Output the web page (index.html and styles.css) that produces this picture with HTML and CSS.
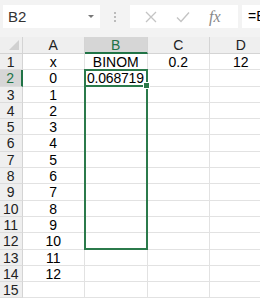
FILE: index.html
```html
<!DOCTYPE html>
<html lang="en">
<head>
    <meta charset="UTF-8">
    <title>Hoja</title>
    <link rel="stylesheet" href="styles.css">
</head>
<body>

    <!-- Barra de fórmulas -->
    <div class="toolbar">
        <div class="namebox">
            <span>B2</span>
            <span class="caret"></span>
        </div>
        <div class="grip"><i></i><i></i><i></i></div>
        <div class="fx-buttons">
            <svg width="12" height="12" viewBox="0 0 12 12"><path d="M1 1L11 11M11 1L1 11" stroke="#c4c4c4" stroke-width="1.3" fill="none"/></svg>
            <svg width="14" height="12" viewBox="0 0 14 12"><path d="M1 6.5L5 10.5L13 1.5" stroke="#c4c4c4" stroke-width="1.4" fill="none"/></svg>
            <span class="fx">fx</span>
        </div>
        <div class="formula">=BINOM.DIST(A2,$D$1,$C$1,FALSE)</div>
    </div>

    <!-- Hoja -->
    <div class="sheet">
        <div class="corner"><span></span></div>
        <div class="colhead">A</div>
        <div class="colhead active">B</div>
        <div class="colhead">C</div>
        <div class="colhead">D</div>

        <div class="rowhead">1</div><div class="cell">x</div><div class="cell">BINOM</div><div class="cell">0.2</div><div class="cell">12</div>
        <div class="rowhead active">2</div><div class="cell">0</div><div class="cell left">0.068719</div><div class="cell"></div><div class="cell"></div>
        <div class="rowhead">3</div><div class="cell">1</div><div class="cell"></div><div class="cell"></div><div class="cell"></div>
        <div class="rowhead">4</div><div class="cell">2</div><div class="cell"></div><div class="cell"></div><div class="cell"></div>
        <div class="rowhead">5</div><div class="cell">3</div><div class="cell"></div><div class="cell"></div><div class="cell"></div>
        <div class="rowhead">6</div><div class="cell">4</div><div class="cell"></div><div class="cell"></div><div class="cell"></div>
        <div class="rowhead">7</div><div class="cell">5</div><div class="cell"></div><div class="cell"></div><div class="cell"></div>
        <div class="rowhead">8</div><div class="cell">6</div><div class="cell"></div><div class="cell"></div><div class="cell"></div>
        <div class="rowhead">9</div><div class="cell">7</div><div class="cell"></div><div class="cell"></div><div class="cell"></div>
        <div class="rowhead">10</div><div class="cell">8</div><div class="cell"></div><div class="cell"></div><div class="cell"></div>
        <div class="rowhead">11</div><div class="cell">9</div><div class="cell"></div><div class="cell"></div><div class="cell"></div>
        <div class="rowhead">12</div><div class="cell">10</div><div class="cell"></div><div class="cell"></div><div class="cell"></div>
        <div class="rowhead">13</div><div class="cell">11</div><div class="cell"></div><div class="cell"></div><div class="cell"></div>
        <div class="rowhead">14</div><div class="cell">12</div><div class="cell"></div><div class="cell"></div><div class="cell"></div>
        <div class="rowhead">15</div><div class="cell"></div><div class="cell"></div><div class="cell"></div><div class="cell"></div>

        <!-- Selección B2:B12 -->
        <div class="selection"></div>
        <div class="active-cell"><span class="handle"></span></div>
    </div>

</body>
</html>
```

FILE: styles.css
```css
/* Estilos generales */
body {
    margin: 0;
    padding: 0;
    font-family: "Liberation Sans", Arial, sans-serif;
    background-color: #fff;
    color: #000;
    overflow: hidden;
}

/* Barra de fórmulas */
.toolbar {
    height: 37px;
    background-color: #f3f3f3;
    display: flex;
    align-items: flex-start;
    padding-top: 5px;
    box-sizing: border-box;
}

.namebox {
    width: 97px;
    height: 23px;
    margin-left: 3px;
    background: #fff;
    display: flex;
    align-items: center;
    justify-content: space-between;
    padding: 0 6px 0 5px;
    box-sizing: border-box;
    font-size: 15px;
    color: #333;
}

.caret {
    width: 0;
    height: 0;
    border-left: 3px solid transparent;
    border-right: 3px solid transparent;
    border-top: 3px solid #777;
}

.grip {
    width: 30px;
    height: 23px;
    display: flex;
    flex-direction: column;
    align-items: center;
    justify-content: center;
    gap: 2px;
}

.grip i {
    width: 2px;
    height: 2px;
    background: #bbb;
}

.fx-buttons {
    width: 108px;
    height: 23px;
    background: #fff;
    display: flex;
    align-items: center;
    justify-content: space-around;
    padding: 0 8px 0 6px;
    box-sizing: border-box;
}

.fx {
    font-family: "Liberation Serif", serif;
    font-style: italic;
    font-size: 16px;
    color: #888;
}

.formula {
    flex: 1;
    height: 23px;
    margin-left: 4px;
    background: #fff;
    font-size: 14px;
    line-height: 23px;
    padding-left: 6px;
    white-space: nowrap;
    overflow: hidden;
}

/* Hoja */
.sheet {
    position: relative;
    display: grid;
    grid-template-columns: 22.5px 62.5px 62.5px 62.5px 62.5px;
    grid-template-rows: 17px;
    grid-auto-rows: 16.3px;
    font-size: 14px;
}

.corner {
    background: #efefef;
    border-right: 1px solid #d4d4d4;
    border-bottom: 1px solid #d4d4d4;
    position: relative;
}

.corner span {
    position: absolute;
    right: 3px;
    bottom: 3px;
    width: 0;
    height: 0;
    border-left: 10px solid transparent;
    border-bottom: 10px solid #d0d0d0;
}

.colhead {
    background: #efefef;
    border-right: 1px solid #d4d4d4;
    border-bottom: 1px solid #d4d4d4;
    text-align: center;
    line-height: 17px;
    color: #222;
}

.colhead.active {
    background: #d6d6d6;
    color: #217346;
    border-bottom: 2px solid #217346;
}

.rowhead {
    background: #efefef;
    border-right: 1px solid #d4d4d4;
    border-bottom: 1px solid #dcdcdc;
    text-align: center;
    line-height: 16px;
    color: #222;
}

.rowhead.active {
    background: #d6d6d6;
    color: #217346;
    border-right: 2px solid #217346;
}

.cell {
    border-right: 1px solid #e2e2e2;
    border-bottom: 1px solid #e2e2e2;
    text-align: center;
    line-height: 16px;
    white-space: nowrap;
    overflow: hidden;
}

.cell.left {
    text-align: left;
    padding-left: 2px;
    letter-spacing: -0.2px;
}

/* Selección */
.selection,
.active-cell {
    position: absolute;
    left: 84px;
    top: 32px;
    width: 64px;
    box-sizing: border-box;
    border: 2px solid #2b7a4b;
}

.selection {
    height: 181px;
}

.active-cell {
    height: 18px;
}

.handle {
    position: absolute;
    right: -4px;
    bottom: -4px;
    width: 5px;
    height: 5px;
    background: #2b7a4b;
    border: 1px solid #fff;
}
```
